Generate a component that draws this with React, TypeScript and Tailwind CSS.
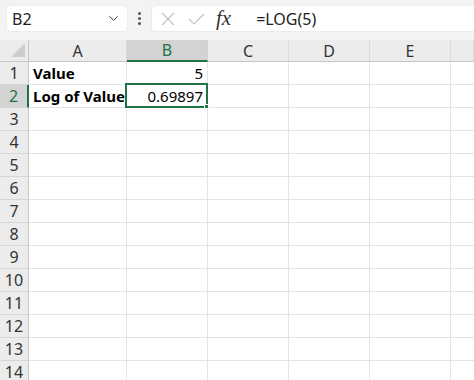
import { ChevronDown } from 'lucide-react';

const cols = ['A', 'B', 'C', 'D', 'E', ''];
const rows = Array.from({ length: 14 }, (_, i) => i + 1);

const font = { fontFamily: '"Noto Sans", "Open Sans", sans-serif' };

function Toolbar() {
  return (
    <div className="flex h-[40px] items-start gap-0 bg-[#f3f3f3] pt-[6px] pl-[7px]">
      {/* name box */}
      <div className="flex h-[25px] w-[120px] items-center justify-between rounded-[4px] bg-white pl-[5px] pr-[6px] shadow-[0_0_0_1px_#ececec]">
        <span className="text-[16px] text-[#222]">B2</span>
        <ChevronDown size={15} strokeWidth={1.6} className="text-[#333]" />
      </div>
      <div className="flex h-[25px] w-[25px] flex-col items-center justify-center gap-[2px]">
        <span className="h-[3px] w-[3px] rounded-full bg-[#555]" />
        <span className="h-[3px] w-[3px] rounded-full bg-[#555]" />
        <span className="h-[3px] w-[3px] rounded-full bg-[#555]" />
      </div>
      {/* formula bar */}
      <div className="flex h-[25px] flex-1 items-center rounded-l-[4px] bg-white pl-[8px] shadow-[0_0_0_1px_#ececec]">
        <svg width="16" height="16" viewBox="0 0 16 16" className="mr-[12px]">
          <path d="M2 2 L14 14 M14 2 L2 14" stroke="#c4c4c4" strokeWidth="1.2" fill="none" />
        </svg>
        <svg width="17" height="14" viewBox="0 0 17 14" className="mr-[11px]">
          <path d="M1 7 L6 12 L16 2" stroke="#c4c4c4" strokeWidth="1.2" fill="none" />
        </svg>
        <span
          className="text-[21px] leading-none italic text-[#333]"
          style={{ fontFamily: '"Liberation Serif", serif' }}
        >
          fx
        </span>
        <span className="ml-[25px] text-[16px] text-[#222]">=LOG(5)</span>
      </div>
    </div>
  );
}

export default function App() {
  return (
    <div className="h-[380px] w-[474px] overflow-hidden bg-white" style={font}>
      <Toolbar />

      <div className="grid grid-cols-[29px_98px_81px_81px_81px_81px_1fr] grid-rows-[22px_repeat(14,23px)]">
        {/* corner */}
        <div className="relative border-r border-b border-[#c6c6c6] bg-[#ececec]">
          <svg width="14" height="14" viewBox="0 0 14 14" className="absolute right-[3px] bottom-[4px]">
            <path d="M14 0 L14 14 L0 14 Z" fill="#cdcdcd" />
          </svg>
        </div>
        {cols.map((c, i) => (
          <div
            key={c + i}
            className={
              c === 'B'
                ? 'flex items-center justify-center border-r border-b-2 border-r-[#d0d0d0] border-b-[#217346] bg-[#d3d3d3] text-[16px] text-[#217346]'
                : 'flex items-center justify-center border-r border-b border-r-[#dadada] border-b-[#c6c6c6] bg-[#ececec] text-[16px] text-[#333]'
            }
          >
            {c}
          </div>
        ))}

        {rows.map(r => (
          <Row key={r} r={r} />
        ))}
      </div>
    </div>
  );
}

function Row({ r }: { r: number }) {
  const selected = r === 2;
  return (
    <>
      <div
        className={
          selected
            ? 'flex items-center justify-center border-r-2 border-b border-r-[#217346] border-b-[#d6d6d6] bg-[#d3d3d3] text-[16px] text-[#217346]'
            : 'flex items-center justify-center border-r border-b border-r-[#c6c6c6] border-b-[#d6d6d6] bg-[#ececec] text-[16px] text-[#333]'
        }
      >
        {r}
      </div>
      <div className="flex items-center border-r border-b border-[#e4e4e4] pl-[4px] text-[15px] font-bold text-black">
        {r === 1 ? 'Value' : r === 2 ? 'Log of Value' : ''}
      </div>
      <div className="relative flex items-center justify-end border-r border-b border-[#e4e4e4] pr-[4px] text-[15px] text-black">
        {r === 1 ? '5' : r === 2 ? '0.69897' : ''}
        {selected && (
          <div className="absolute -top-[2px] -left-[2px] h-[25px] w-[83px] border-2 border-[#217346]">
            <span className="absolute -right-[3px] -bottom-[3px] h-[5px] w-[5px] border border-white bg-[#217346]" />
          </div>
        )}
      </div>
      <div className="border-r border-b border-[#e4e4e4]" />
      <div className="border-r border-b border-[#e4e4e4]" />
      <div className="border-r border-b border-[#e4e4e4]" />
      <div className="border-b border-[#e4e4e4]" />
    </>
  );
}
